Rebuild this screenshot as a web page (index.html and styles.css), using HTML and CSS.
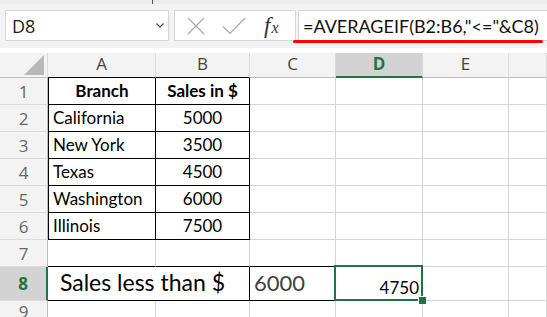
FILE: index.html
```html
<!DOCTYPE html>
<html>

<head>
	<meta charset="utf-8">
	<title>AVERAGEIF less than</title>
	<meta name="viewport" content="width=device-width, initial-scale=1">
	<link rel="stylesheet" href="styles.css">
</head>

<body>
	<div class="topline"><span class="tick"></span></div>
	<div class="formula-bar">
		<div class="name-box">
			<span>D8</span>
			<svg class="chevron" width="8" height="5" viewBox="0 0 8 5"><path d="M0.5 0.5 L4 4 L7.5 0.5" fill="none" stroke="#444" stroke-width="1.1"/></svg>
		</div>
		<div class="fx-box">
			<svg class="icon" width="18" height="18" viewBox="0 0 18 18"><path d="M1 1 L17 17 M17 1 L1 17" stroke="#a8a8a8" stroke-width="1.2"/></svg>
			<svg class="icon" width="24" height="18" viewBox="0 0 24 18"><path d="M1 9.5 L8 16.5 L23 1" fill="none" stroke="#a8a8a8" stroke-width="1.2"/></svg>
			<span class="fx">f<span class="fx__x">x</span></span>
		</div>
		<div class="formula-input">
			=AVERAGEIF(B2:B6,"&lt;="&amp;C8)
			<span class="mark"></span>
		</div>
	</div>

	<div class="sheet">
		<!-- header row -->
		<div class="corner"><span class="corner__tri"></span></div>
		<div class="hd hd--table">A</div>
		<div class="hd hd--table">B</div>
		<div class="hd">C</div>
		<div class="hd hd--active">D</div>
		<div class="hd">E</div>
		<div class="hd"></div>

		<!-- 1 -->
		<div class="rh">1</div>
		<div class="c t t--first t--top bold center">Branch</div>
		<div class="c t t--top bold center">Sales in $</div>
		<div class="c"></div><div class="c"></div><div class="c"></div><div class="c"></div>

		<!-- 2 -->
		<div class="rh">2</div>
		<div class="c t t--first">California</div>
		<div class="c t center">5000</div>
		<div class="c"></div><div class="c"></div><div class="c"></div><div class="c"></div>

		<!-- 3 -->
		<div class="rh">3</div>
		<div class="c t t--first">New York</div>
		<div class="c t center">3500</div>
		<div class="c"></div><div class="c"></div><div class="c"></div><div class="c"></div>

		<!-- 4 -->
		<div class="rh">4</div>
		<div class="c t t--first">Texas</div>
		<div class="c t center">4500</div>
		<div class="c"></div><div class="c"></div><div class="c"></div><div class="c"></div>

		<!-- 5 -->
		<div class="rh">5</div>
		<div class="c t t--first">Washington</div>
		<div class="c t center">6000</div>
		<div class="c"></div><div class="c"></div><div class="c"></div><div class="c"></div>

		<!-- 6 -->
		<div class="rh">6</div>
		<div class="c t t--first">Illinois</div>
		<div class="c t center">7500</div>
		<div class="c"></div><div class="c"></div><div class="c"></div><div class="c"></div>

		<!-- 7 -->
		<div class="rh">7</div>
		<div class="c b-b"></div>
		<div class="c b-b"></div>
		<div class="c b-b"></div>
		<div class="c"></div><div class="c"></div><div class="c"></div>

		<!-- 8 -->
		<div class="rh rh--active">8</div>
		<div class="c t big merged">&nbsp;Sales less than $</div>
		<div class="c t big grey">6000</div>
		<div class="c right selected">4750</div>
		<div class="c"></div><div class="c"></div>

		<!-- 9 -->
		<div class="rh rh--last">9</div>
		<div class="c"></div><div class="c"></div><div class="c"></div><div class="c"></div><div class="c"></div><div class="c"></div>
	</div>
</body>

</html>
```

FILE: styles.css
```css
* {
	box-sizing: border-box;
}

html,
body {
	margin: 0;
	padding: 0;
	width: 547px;
	height: 317px;
	overflow: hidden;
	background: #f3f3f3;
	font-family: 'Open Sans', sans-serif;
}

/* formula bar */

.topline {
	height: 4px;
	background: #ececec;
	position: relative;
}

.tick {
	position: absolute;
	left: 152px;
	top: 0;
	width: 1px;
	height: 4px;
	background: #555;
}

.formula-bar {
	display: flex;
	gap: 5px;
	height: 44px;
	padding: 6px 0 0 5px;
}

.name-box,
.fx-box,
.formula-input {
	height: 31px;
	background: #fff;
	border: 1px solid #d6d6d6;
	display: flex;
	align-items: center;
}

.name-box {
	flex-shrink: 0;
	width: 164px;
	justify-content: space-between;
	padding: 0 4px 0 6px;
	font-size: 18px;
	color: #222;
}

.fx-box {
	flex-shrink: 0;
	width: 122px;
	padding-left: 12px;
	gap: 17px;
	margin-right: -3px;
}

.fx {
	font-family: 'Liberation Serif', serif;
	font-style: italic;
	font-size: 23px;
	color: #333;
	margin-left: 1px;
	letter-spacing: 1px;
}

.fx__x {
	font-size: 16px;
}

.formula-input {
	position: relative;
	flex: 1;
	min-width: 0;
	padding-left: 4px;
	font-family: Lato, sans-serif;
	font-size: 18px;
	color: #111;
	border-right: none;
	white-space: nowrap;
}

.mark {
	position: absolute;
	left: -6px;
	right: 4px;
	bottom: -3px;
	height: 3px;
	border-radius: 2px;
	background: #f00;
}

/* grid */

.sheet {
	display: grid;
	grid-template-columns: 48px 108px 94px 86px 87px 86px 1fr;
	grid-template-rows: 30px repeat(7, 27px) 34px 1fr;
	height: 269px;
	background: #fff;
}

.corner,
.hd {
	background: #f3f3f3;
}

.corner {
	position: relative;
	border-right: 1px solid #dadada;
	border-bottom: 1px solid #bdbdbd;
	margin-top: 5px;
}

.corner__tri {
	position: absolute;
	right: 3px;
	bottom: 2px;
	width: 0;
	height: 0;
	border-left: 20px solid transparent;
	border-bottom: 20px solid #b8b8b8;
}

.hd {
	margin-top: 5px;
	border-right: 1px solid #dadada;
	border-bottom: 1px solid #bdbdbd;
	display: flex;
	align-items: center;
	justify-content: center;
	padding-bottom: 3px;
	font-size: 17px;
	color: #444;
}

.hd--table {
	border-bottom-color: #000;
}

.hd--active {
	background: #d3d3d3;
	border-bottom: 2px solid #217346;
	color: #217346;
	font-weight: 700;
}

.rh {
	background: #f3f3f3;
	border-right: 1px solid #bdbdbd;
	border-bottom: 1px solid #dadada;
	display: flex;
	align-items: center;
	justify-content: center;
	font-size: 17px;
	color: #666;
}

.rh--active {
	background: #d3d3d3;
	border-right: 2px solid #217346;
	color: #217346;
	font-weight: 700;
}

.rh--last {
	align-items: flex-start;
	line-height: 1;
	padding-top: 2px;
}

.c {
	border-right: 1px solid #d4d4d4;
	border-bottom: 1px solid #d4d4d4;
	display: flex;
	align-items: flex-end;
	padding: 0 4px 3px;
	font-family: Lato, sans-serif;
	font-size: 17px;
	color: #000;
	white-space: nowrap;
}

.t {
	border-right-color: #000;
	border-bottom-color: #000;
}

.t--first {
	border-left: 1px solid #000;
}

.b-b {
	border-bottom-color: #000;
}

.bold {
	font-weight: 700;
}

.center {
	justify-content: center;
}

.right {
	justify-content: flex-end;
}

.big {
	font-size: 22px;
	padding-bottom: 4px;
}

.merged {
	grid-column: span 2;
	padding-left: 6px;
	font-size: 23px;
}

.grey {
	color: #404040;
}

.selected {
	position: relative;
	padding-right: 3px;
	padding-bottom: 2px;
}

.selected::before {
	content: '';
	position: absolute;
	top: -2px;
	left: -2px;
	right: -1px;
	bottom: -1px;
	border: 2px solid #217346;
}

.selected::after {
	content: '';
	position: absolute;
	right: -4px;
	bottom: -4px;
	width: 7px;
	height: 7px;
	background: #217346;
	border-top: 1px solid #fff;
	border-left: 1px solid #fff;
}
```
